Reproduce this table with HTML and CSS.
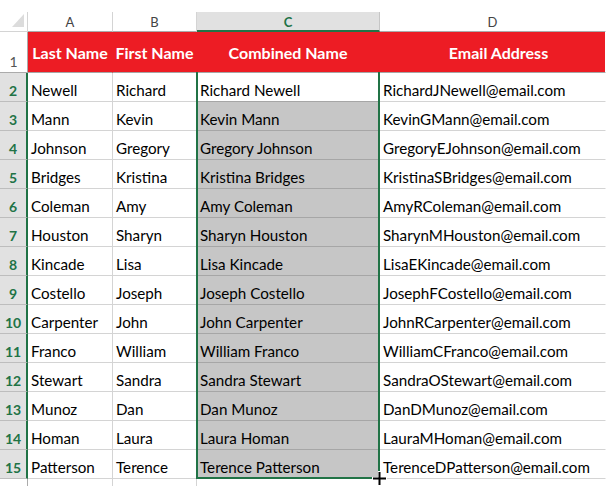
FILE: index.html
```html
<!DOCTYPE html>
<html>
<head>
<meta charset="utf-8">
<link rel="stylesheet" href="styles.css">
</head>
<body>
<div class="sheet">
  <div class="grid">
    <div class="corner"><span class="tri"></span></div>
    <div class="colh">A</div>
    <div class="colh">B</div>
    <div class="colh colh-sel">C</div>
    <div class="colh colh-last">D</div>

    <div class="rowh rowh-first">1</div>
    <div class="hcell">Last Name</div>
    <div class="hcell">First Name</div>
    <div class="hcell">Combined Name</div>
    <div class="hcell hcell-last">Email Address</div>

    <div class="rowh rowh-sel">2</div><div class="cell">Newell</div><div class="cell">Richard</div><div class="cell cell-active">Richard Newell</div><div class="cell cell-last">RichardJNewell@email.com</div>
    <div class="rowh rowh-sel">3</div><div class="cell">Mann</div><div class="cell">Kevin</div><div class="cell cell-sel">Kevin Mann</div><div class="cell cell-last">KevinGMann@email.com</div>
    <div class="rowh rowh-sel">4</div><div class="cell">Johnson</div><div class="cell">Gregory</div><div class="cell cell-sel">Gregory Johnson</div><div class="cell cell-last">GregoryEJohnson@email.com</div>
    <div class="rowh rowh-sel">5</div><div class="cell">Bridges</div><div class="cell">Kristina</div><div class="cell cell-sel">Kristina Bridges</div><div class="cell cell-last">KristinaSBridges@email.com</div>
    <div class="rowh rowh-sel">6</div><div class="cell">Coleman</div><div class="cell">Amy</div><div class="cell cell-sel">Amy Coleman</div><div class="cell cell-last">AmyRColeman@email.com</div>
    <div class="rowh rowh-sel">7</div><div class="cell">Houston</div><div class="cell">Sharyn</div><div class="cell cell-sel">Sharyn Houston</div><div class="cell cell-last">SharynMHouston@email.com</div>
    <div class="rowh rowh-sel">8</div><div class="cell">Kincade</div><div class="cell">Lisa</div><div class="cell cell-sel">Lisa Kincade</div><div class="cell cell-last">LisaEKincade@email.com</div>
    <div class="rowh rowh-sel">9</div><div class="cell">Costello</div><div class="cell">Joseph</div><div class="cell cell-sel">Joseph Costello</div><div class="cell cell-last">JosephFCostello@email.com</div>
    <div class="rowh rowh-sel">10</div><div class="cell">Carpenter</div><div class="cell">John</div><div class="cell cell-sel">John Carpenter</div><div class="cell cell-last">JohnRCarpenter@email.com</div>
    <div class="rowh rowh-sel">11</div><div class="cell">Franco</div><div class="cell">William</div><div class="cell cell-sel">William Franco</div><div class="cell cell-last">WilliamCFranco@email.com</div>
    <div class="rowh rowh-sel">12</div><div class="cell">Stewart</div><div class="cell">Sandra</div><div class="cell cell-sel">Sandra Stewart</div><div class="cell cell-last">SandraOStewart@email.com</div>
    <div class="rowh rowh-sel">13</div><div class="cell">Munoz</div><div class="cell">Dan</div><div class="cell cell-sel">Dan Munoz</div><div class="cell cell-last">DanDMunoz@email.com</div>
    <div class="rowh rowh-sel">14</div><div class="cell">Homan</div><div class="cell">Laura</div><div class="cell cell-sel">Laura Homan</div><div class="cell cell-last">LauraMHoman@email.com</div>
    <div class="rowh rowh-sel">15</div><div class="cell">Patterson</div><div class="cell">Terence</div><div class="cell cell-sel">Terence Patterson</div><div class="cell cell-last">TerenceDPatterson@email.com</div>

    <div class="rowh rowh-tail"></div><div class="cell"></div><div class="cell"></div><div class="cell"></div><div class="cell cell-last"></div>
  </div>
  <div class="selection"></div>
  <svg class="cursor" width="15" height="15" viewBox="0 0 15 15">
    <path d="M6 0h3v6h6v3H9v6H6V9H0V6h6z" fill="#fff"/>
    <rect x="6.5" y="1" width="2" height="13" fill="#000"/>
    <rect x="1" y="6.5" width="13" height="2" fill="#000"/>
  </svg>
</div>
</body>
</html>
```

FILE: styles.css
```css
html, body {
  margin: 0;
  padding: 0;
  background: #fff;
  overflow: hidden;
}

.sheet {
  position: relative;
  width: 606px;
  height: 486px;
  padding-top: 12px;
  box-sizing: border-box;
  font-family: Lato, "Open Sans", sans-serif;
  color: #000;
}

.grid {
  display: grid;
  grid-template-columns: 28px 85px 84px 183px 226px;
  grid-template-rows: 20px 41px repeat(14, 29px) 10px;
}

.grid > div {
  box-sizing: border-box;
  border-right: 1px solid #d4d4d4;
  border-bottom: 1px solid #d4d4d4;
  overflow: hidden;
  white-space: nowrap;
}

.corner {
  position: relative;
  background: #fff;
}

.tri {
  position: absolute;
  right: 3px;
  bottom: 4px;
  width: 0;
  height: 0;
  border-left: 12px solid transparent;
  border-bottom: 13px solid #dcdcdc;
}

.colh {
  display: flex;
  align-items: center;
  justify-content: center;
  padding-top: 1px;
  font-size: 13px;
  color: #444;
  background: #fff;
}

.grid > .colh {
  border-bottom-color: #ababab;
}

.grid > .colh-sel {
  background: #e1e1e1;
  color: #217346;
  font-weight: bold;
  border-bottom: 2px solid #217346;
  border-right-color: #c6c6c6;
}

.grid > .colh-last,
.grid > .cell-last,
.grid > .hcell-last {
  border-right-color: #fff;
}

.rowh {
  display: flex;
  align-items: center;
  justify-content: center;
  font-size: 14px;
}

.grid > .rowh-first {
  align-items: flex-end;
  padding-bottom: 2px;
  color: #555;
  background: #fff;
  border-right-color: #ababab;
  border-bottom-color: #ababab;
}

.grid > .rowh-sel {
  background: #e1e1e1;
  color: #217346;
  font-weight: bold;
  padding-top: 6px;
  border-right: 2px solid #217346;
  border-bottom-color: #bdbdbd;
}

.grid > .rowh-tail {
  background: #fff;
  border-right-color: #ababab;
  border-bottom: none;
}

.hcell {
  display: flex;
  align-items: center;
  justify-content: center;
  background: #ed1c24;
  color: #fff;
  font-weight: bold;
  font-size: 16px;
}

.grid > .hcell {
  border-right-color: #ed1c24;
  border-bottom-color: #a6a6a6;
}

.grid > .hcell-last {
  padding-left: 12px;
  border-right-color: #fff;
}

.cell {
  display: flex;
  align-items: flex-end;
  padding: 0 0 2px 3px;
  font-size: 15.2px;
}

.grid > .cell-sel {
  background: #c6c6c6;
  border-bottom-color: #a6a6a6;
}

.grid > .cell-active {
  border-bottom-color: #a6a6a6;
}

.selection {
  position: absolute;
  left: 196px;
  top: 72px;
  width: 184px;
  height: 407px;
  box-sizing: border-box;
  border: 2px solid #217346;
  border-top: none;
}

.cursor {
  position: absolute;
  left: 372px;
  top: 471px;
}
```
